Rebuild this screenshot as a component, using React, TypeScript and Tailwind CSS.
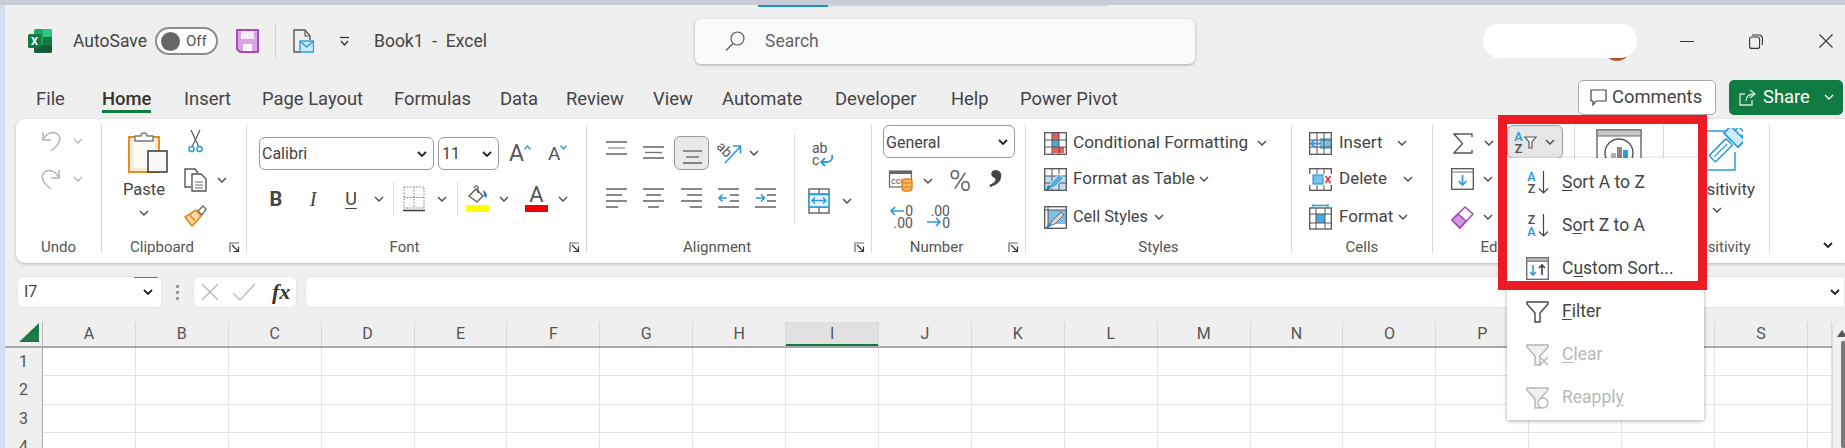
import React from 'react';

const columns = ['A', 'B', 'C', 'D', 'E', 'F', 'G', 'H', 'I', 'J', 'K', 'L', 'M', 'N', 'O', 'P', 'Q', 'R', 'S', ''];
const rows = ['1', '2', '3', '4'];

const tabs = [
    { label: 'File', cell: 'w-[66px]' },
    { label: 'Home', cell: 'w-[82px]' },
    { label: 'Insert', cell: 'w-[78px]' },
    { label: 'Page Layout', cell: 'w-[132px]' },
    { label: 'Formulas', cell: 'w-[106px]' },
    { label: 'Data', cell: 'w-[66px]' },
    { label: 'Review', cell: 'w-[87px]' },
    { label: 'View', cell: 'w-[69px]' },
    { label: 'Automate', cell: 'w-[113px]' },
    { label: 'Developer', cell: 'w-[116px]' },
    { label: 'Help', cell: 'w-[69px]' },
    { label: 'Power Pivot', cell: 'w-[110px]' },
];

const GRAY = '#5a5a5a';
const BLUE = '#2e9bdc';
const svgFont = 'Roboto, sans-serif';

function Chev({ className = '', dark = false }: { className?: string; dark?: boolean }) {
    return (
        <svg viewBox="0 0 10 6" className={`w-[10px] h-[6px] shrink-0 ${className}`}>
            <polyline points="1,1 5,5 9,1" fill="none" stroke={dark ? '#222' : '#4a4a4a'} strokeWidth={dark ? 1.8 : 1.4} />
        </svg>
    );
}

function ExcelLogo() {
    return (
        <svg viewBox="0 0 24 24" className="w-[24px] h-[24px] shrink-0 overflow-visible">
            <rect x="6" y="0" width="18" height="24" rx="2" fill="#21a366" />
            <path d="M15 0h7a2 2 0 0 1 2 2v6h-9z" fill="#33c481" />
            <rect x="15" y="8" width="9" height="8" fill="#107c41" />
            <path d="M6 16h18v6a2 2 0 0 1-2 2H8a2 2 0 0 1-2-2z" fill="#185c37" />
            <rect x="0" y="5" width="13" height="14" rx="1.5" fill="#107c41" />
            <text x="6.5" y="16" fontSize="11" fontWeight="700" textAnchor="middle" fill="#fff" fontFamily={svgFont}>X</text>
        </svg>
    );
}

function SaveIcon() {
    return (
        <svg viewBox="0 0 23 24" className="w-[23px] h-[24px] shrink-0">
            <path d="M1 1h21v22H4l-3-3z" fill="#d9a5e3" stroke="#ab47bf" strokeWidth="2" />
            <rect x="5" y="2" width="13" height="8" fill="#f6ecf8" />
            <rect x="7" y="15" width="9" height="7" fill="#fbf5fc" />
        </svg>
    );
}

function DocMail() {
    return (
        <svg viewBox="0 0 21 24" className="w-[21px] h-[24px] shrink-0">
            <path d="M9 23H1V1h11l5 6v4" fill="none" stroke={GRAY} strokeWidth="1.4" />
            <path d="M12 1v6h5" fill="none" stroke={GRAY} strokeWidth="1.2" />
            <rect x="7" y="12" width="13.5" height="11" fill="#cfe8f7" stroke={BLUE} strokeWidth="1.4" />
            <polyline points="7,12 13.7,18 20.5,12" fill="none" stroke={BLUE} strokeWidth="1.4" />
        </svg>
    );
}

function QuickMenu() {
    return (
        <svg viewBox="0 0 11 11" className="w-[11px] h-[11px] shrink-0">
            <line x1="1" y1="1.5" x2="10" y2="1.5" stroke="#333" strokeWidth="1.3" />
            <polyline points="2,5 5.5,9 9,5" fill="none" stroke="#333" strokeWidth="1.3" />
        </svg>
    );
}

function SearchIcon() {
    return (
        <svg viewBox="0 0 20 20" className="w-[20px] h-[20px] shrink-0">
            <circle cx="12.5" cy="7.5" r="6.5" fill="none" stroke="#555" strokeWidth="1.2" />
            <line x1="8" y1="12.5" x2="1" y2="19.5" stroke="#555" strokeWidth="1.3" />
        </svg>
    );
}

function Undo({ flip = false }: { flip?: boolean }) {
    return (
        <svg viewBox="0 0 20 22" className={`w-[20px] h-[22px] shrink-0 ${flip ? '-scale-x-100' : ''}`}>
            <path d="M2 2v8h8" fill="none" stroke="#b3b3b3" strokeWidth="1.4" />
            <path d="M2 10C6 2 14 0 18 6c3 5-3 11-8 15" fill="none" stroke="#b3b3b3" strokeWidth="1.4" />
        </svg>
    );
}

function PasteIcon() {
    return (
        <svg viewBox="0 0 40 41" className="w-[40px] h-[41px] shrink-0">
            <rect x="1" y="5" width="30" height="35" fill="#fdf4e6" stroke="#e98a1f" strokeWidth="2" />
            <rect x="4" y="8" width="24" height="29" fill="#fdfaf3" stroke="#f6d7ad" strokeWidth="1" />
            <path d="M7 9V4h6c0-4 6-4 6 0h6v5z" fill="#fff" stroke="#7a7a7a" strokeWidth="1.4" />
            <rect x="20" y="19" width="19" height="21" fill="#f8f8f8" stroke="#444" strokeWidth="1.6" />
        </svg>
    );
}

function Scissors() {
    return (
        <svg viewBox="0 0 15 23" className="w-[15px] h-[23px] shrink-0">
            <line x1="3" y1="0" x2="10.5" y2="16" stroke="#555" strokeWidth="1.2" />
            <line x1="12" y1="0" x2="4.5" y2="16" stroke="#555" strokeWidth="1.2" />
            <circle cx="3.5" cy="19" r="2.6" fill="#fff" stroke={BLUE} strokeWidth="1.5" />
            <circle cx="11.5" cy="19" r="2.6" fill="#fff" stroke={BLUE} strokeWidth="1.5" />
        </svg>
    );
}

function CopyIcon() {
    return (
        <svg viewBox="0 0 23 24" className="w-[23px] h-[24px] shrink-0">
            <path d="M7 19H1V1h10l3 4" fill="none" stroke="#555" strokeWidth="1.4" />
            <path d="M8 6h9l5 5v12H8z" fill="#fff" stroke="#555" strokeWidth="1.4" />
            <line x1="11" y1="14" x2="19" y2="14" stroke="#888" strokeWidth="1.2" />
            <line x1="11" y1="17" x2="19" y2="17" stroke="#888" strokeWidth="1.2" />
            <line x1="11" y1="20" x2="19" y2="20" stroke="#888" strokeWidth="1.2" />
        </svg>
    );
}

function PainterIcon() {
    return (
        <svg viewBox="0 0 23 22" className="w-[23px] h-[22px] shrink-0">
            <path d="M12 5l5 6-4 5-5 5-7-9 5-3z" fill="#fbd9ae" stroke="#e8861a" strokeWidth="1.6" />
            <line x1="6" y1="10" x2="11" y2="16" stroke="#e8861a" strokeWidth="1.4" />
            <path d="M14 6l5-5 3 3-4 6z" fill="#fff" stroke="#666" strokeWidth="1.3" />
        </svg>
    );
}

function Launcher({ className = '' }: { className?: string }) {
    return (
        <svg viewBox="0 0 11 11" className={`w-[11px] h-[11px] shrink-0 ${className}`}>
            <path d="M1 10V1h9" fill="none" stroke="#666" strokeWidth="1.2" />
            <path d="M3 3l6.5 6.5M9.5 4.5v5h-5" fill="none" stroke="#333" strokeWidth="1.2" />
        </svg>
    );
}

function FontStep({ up }: { up: boolean }) {
    return (
        <div className="flex items-start h-[24px] shrink-0">
            <span className={up ? 'text-[23px] leading-[24px] text-[#555]' : 'text-[19px] leading-[24px] text-[#555]'}>A</span>
            <svg viewBox="0 0 7 5" className="w-[7px] h-[5px] mt-[3px]">
                <polyline points={up ? '0.5,4.5 3.5,1 6.5,4.5' : '0.5,0.5 3.5,4 6.5,0.5'} fill="none" stroke={BLUE} strokeWidth="1.4" />
            </svg>
        </div>
    );
}

function BorderIcon() {
    return (
        <svg viewBox="0 0 22 26" className="w-[22px] h-[26px] shrink-0">
            <rect x="1" y="1" width="20" height="21" fill="none" stroke="#777" strokeWidth="1" strokeDasharray="1.5 1.5" />
            <line x1="11" y1="1" x2="11" y2="22" stroke="#777" strokeWidth="1" strokeDasharray="1.5 1.5" />
            <line x1="1" y1="11.5" x2="21" y2="11.5" stroke="#777" strokeWidth="1" strokeDasharray="1.5 1.5" />
            <line x1="0" y1="24.5" x2="22" y2="24.5" stroke="#444" strokeWidth="1.6" />
        </svg>
    );
}

function FillIcon() {
    return (
        <svg viewBox="0 0 23 27" className="w-[23px] h-[27px] shrink-0">
            <path d="M3 11l7-7 7 7-6 6z" fill="#fff" stroke="#555" strokeWidth="1.3" />
            <path d="M8 3c1-3 4-3 4 0v5" fill="none" stroke="#555" strokeWidth="1.2" />
            <path d="M17 5c2 1 4 3 4 7-1 1-3 0-3-2z" fill="#1f7fc9" />
            <rect x="0" y="20" width="23" height="7" fill="#ffff00" />
        </svg>
    );
}

function Lines({ kind }: { kind: string }) {
    const sets: Record<string, [number, number, number, string][]> = {
        top: [[0, 21, -1, '#555'], [2, 19, 5, '#999'], [0, 21, 11, '#555']],
        middle: [[0, 21, 4, '#555'], [2, 19, 9.5, '#777'], [0, 21, 15, '#555']],
        bottom: [[1, 20, 8, '#666'], [4, 17, 14, '#666'], [1, 20, 20, '#555']],
        left: [[0, 21, 1, '#555'], [0, 16, 7, '#555'], [0, 21, 13, '#555'], [0, 12, 19, '#555']],
        center: [[0, 21, 1, '#555'], [3, 18, 7, '#555'], [0, 21, 13, '#555'], [5, 16, 19, '#555']],
        right: [[0, 21, 1, '#555'], [6, 21, 7, '#555'], [0, 21, 13, '#555'], [9, 21, 19, '#555']],
    };
    return (
        <svg viewBox="0 0 20 20" className="w-[20px] h-[20px] shrink-0 overflow-visible">
            {sets[kind].map(([a, b, y, color]) => (
                <line key={y} x1={a} x2={b} y1={y} y2={y} stroke={color} strokeWidth="1.4" />
            ))}
        </svg>
    );
}

function Indent({ flip = false }: { flip?: boolean }) {
    return (
        <svg viewBox="0 0 21 20" className="w-[21px] h-[20px] shrink-0">
            <line x1="0" x2="21" y1="1" y2="1" stroke="#555" strokeWidth="1.4" />
            <line x1="12" x2="21" y1="7" y2="7" stroke="#555" strokeWidth="1.4" />
            <line x1="12" x2="21" y1="13" y2="13" stroke="#555" strokeWidth="1.4" />
            <line x1="0" x2="21" y1="19" y2="19" stroke="#555" strokeWidth="1.4" />
            {flip ? (
                <path d="M1 10h8M6 6.5l3.5 3.5L6 13.5" fill="none" stroke={BLUE} strokeWidth="1.6" />
            ) : (
                <path d="M9 10H1M4.5 6.5L1 10l3.5 3.5" fill="none" stroke={BLUE} strokeWidth="1.6" />
            )}
        </svg>
    );
}

function OrientIcon() {
    return (
        <svg viewBox="0 0 24 26" className="w-[24px] h-[26px] shrink-0 overflow-visible">
            <text x="7" y="14" fontSize="14" textAnchor="middle" fill="#555" fontFamily={svgFont} transform="rotate(45 7 10)">ab</text>
            <path d="M8 23L23 7M16 6h7.5v7.5" fill="none" stroke={BLUE} strokeWidth="1.6" />
        </svg>
    );
}

function WrapIcon() {
    return (
        <svg viewBox="0 0 21 26" className="w-[21px] h-[26px] shrink-0 overflow-visible">
            <text x="0" y="10" fontSize="14" fill="#555" fontFamily={svgFont}>ab</text>
            <text x="0" y="22" fontSize="14" fill="#555" fontFamily={svgFont}>c</text>
            <path d="M20 12c1 4-1 7-5 7H9M13 15l-4 4 4 4" fill="none" stroke={BLUE} strokeWidth="1.8" />
        </svg>
    );
}

function MergeIcon() {
    return (
        <svg viewBox="0 0 22 26" className="w-[22px] h-[26px] shrink-0">
            <rect x="1" y="1" width="20" height="24" fill="#fff" stroke="#555" strokeWidth="1.3" />
            <line x1="1" y1="6" x2="21" y2="6" stroke="#555" strokeWidth="1.2" />
            <line x1="1" y1="19" x2="21" y2="19" stroke="#555" strokeWidth="1.2" />
            <line x1="11" y1="1" x2="11" y2="6" stroke="#555" strokeWidth="1.2" />
            <line x1="11" y1="19" x2="11" y2="25" stroke="#555" strokeWidth="1.2" />
            <rect x="1" y="6.5" width="20" height="12.5" fill="#e3f2fc" stroke={BLUE} strokeWidth="1.5" />
            <path d="M4 12.5h14M7 9.5l-3 3 3 3M15 9.5l3 3-3 3" fill="none" stroke={BLUE} strokeWidth="1.4" />
        </svg>
    );
}

function AccountingIcon() {
    return (
        <svg viewBox="0 0 24 22" className="w-[24px] h-[22px] shrink-0 overflow-visible">
            <rect x="0.5" y="1" width="22" height="16" fill="#fff" stroke="#666" strokeWidth="1.2" />
            <rect x="0.5" y="1" width="22" height="3" fill="#666" />
            <text x="2" y="14" fontSize="9" fill="#555" fontFamily={svgFont}>ccc</text>
            <rect x="13" y="9" width="10" height="12" rx="3" fill="#f6b26b" stroke="#e8861a" strokeWidth="1.4" />
            <line x1="13" y1="13" x2="23" y2="13" stroke="#e8861a" strokeWidth="1.2" />
            <line x1="13" y1="17" x2="23" y2="17" stroke="#e8861a" strokeWidth="1.2" />
        </svg>
    );
}

function DecimalIcon({ more = false }: { more?: boolean }) {
    return (
        <svg viewBox="0 0 23 24" className="w-[23px] h-[24px] shrink-0 overflow-visible">
            <text x="23" y="11" fontSize="14" textAnchor="end" fill="#555" fontFamily={svgFont}>{more ? '.00' : '0'}</text>
            <text x="23" y="23" fontSize="14" textAnchor="end" fill="#555" fontFamily={svgFont}>{more ? '0' : '.00'}</text>
            {more ? (
                <path d="M0 17h13M9 13l4 4-4 4" fill="none" stroke={BLUE} strokeWidth="1.7" />
            ) : (
                <path d="M14 6H1M5 2L1 6l4 4" fill="none" stroke={BLUE} strokeWidth="1.7" />
            )}
        </svg>
    );
}

function GridBase({ children }: { children?: React.ReactNode }) {
    return (
        <svg viewBox="0 0 23 23" className="w-[23px] h-[23px] shrink-0">
            {children}
        </svg>
    );
}

function GridLines() {
    return (
        <>
            <rect x="0.7" y="0.7" width="21.6" height="21.6" fill="none" stroke="#555" strokeWidth="1.3" />
            <line x1="8" y1="1" x2="8" y2="22" stroke="#555" strokeWidth="1" />
            <line x1="15" y1="1" x2="15" y2="22" stroke="#555" strokeWidth="1" />
            <line x1="1" y1="8" x2="22" y2="8" stroke="#555" strokeWidth="1" />
            <line x1="1" y1="15" x2="22" y2="15" stroke="#555" strokeWidth="1" />
        </>
    );
}

function CondFormatIcon() {
    return (
        <GridBase>
            <rect x="8" y="1" width="7" height="7" fill="#f05a5a" />
            <rect x="8" y="8" width="7" height="7" fill="#4ea8e0" />
            <rect x="8" y="15" width="12" height="6" fill="#f05a5a" />
            <GridLines />
        </GridBase>
    );
}

function TableStyleIcon() {
    return (
        <GridBase>
            <rect x="1" y="8" width="21" height="14" fill="#bfe0f5" />
            <GridLines />
            <path d="M4 21l3-6 8-9 5 4-9 9z" fill="#5cace0" stroke="#fff" strokeWidth="0.8" />
            <path d="M1 22c3 1 6-1 6-4l-3-1c-1 2-1 3-3 5z" fill="#2e85c4" />
        </GridBase>
    );
}

function CellStyleIcon() {
    return (
        <GridBase>
            <rect x="4" y="4" width="18" height="14" fill="#7fc0ea" />
            <rect x="0.7" y="0.7" width="21.6" height="21.6" fill="none" stroke="#555" strokeWidth="1.3" />
            <line x1="1" y1="4" x2="22" y2="4" stroke="#555" strokeWidth="1" />
            <line x1="4" y1="1" x2="4" y2="22" stroke="#555" strokeWidth="1" />
            <path d="M5 20l3-5 9-9 3 3-9 9z" fill="#cfd3d6" stroke="#555" strokeWidth="0.8" />
            <path d="M1 22c3 1 6-1 6-4l-2-1c-1 2-2 3-4 5z" fill="#2e85c4" />
        </GridBase>
    );
}

function InsertCellsIcon() {
    return (
        <GridBase>
            <rect x="11" y="6" width="11" height="11" fill="#7fc0ea" />
            <GridLines />
            <path d="M12 11.5H2M6 7.5l-4 4 4 4" fill="none" stroke={BLUE} strokeWidth="1.8" />
        </GridBase>
    );
}

function DeleteCellsIcon() {
    return (
        <GridBase>
            <rect x="0.7" y="0.7" width="21.6" height="21.6" fill="none" stroke="#555" strokeWidth="1.3" />
            <line x1="8" y1="1" x2="8" y2="6" stroke="#555" strokeWidth="1" />
            <line x1="15" y1="1" x2="15" y2="6" stroke="#555" strokeWidth="1" />
            <line x1="8" y1="17" x2="8" y2="22" stroke="#555" strokeWidth="1" />
            <line x1="15" y1="17" x2="15" y2="22" stroke="#555" strokeWidth="1" />
            <rect x="0" y="6" width="23" height="11" fill="#fff" />
            <rect x="4" y="7" width="10" height="9" fill="#7fc0ea" stroke={BLUE} strokeWidth="1.2" />
            <path d="M16.5 8l5 7M21.5 8l-5 7" stroke="#e03a3a" strokeWidth="1.6" />
        </GridBase>
    );
}

function FormatCellsIcon() {
    return (
        <svg viewBox="0 0 23 26" className="w-[23px] h-[26px] shrink-0">
            <path d="M4 1.5h15M4 0v3M19 0v3" stroke={BLUE} strokeWidth="1.3" />
            <rect x="0.7" y="4" width="21.6" height="21" fill="none" stroke="#555" strokeWidth="1.3" />
            <rect x="7" y="10" width="9" height="9" fill="#4ea8e0" />
            <line x1="7" y1="4" x2="7" y2="25" stroke="#555" strokeWidth="1" />
            <line x1="16" y1="4" x2="16" y2="25" stroke="#555" strokeWidth="1" />
            <line x1="1" y1="10" x2="22" y2="10" stroke="#555" strokeWidth="1" />
            <line x1="1" y1="19" x2="22" y2="19" stroke="#555" strokeWidth="1" />
        </svg>
    );
}

function SumIcon() {
    return (
        <svg viewBox="0 0 20 21" className="w-[20px] h-[21px] shrink-0 ml-[2px]">
            <path d="M19 4V1H1l8.5 9.5L1 20h18v-3" fill="none" stroke="#555" strokeWidth="1.4" />
        </svg>
    );
}

function FillDownIcon() {
    return (
        <svg viewBox="0 0 23 22" className="w-[23px] h-[22px] shrink-0">
            <rect x="0.7" y="0.7" width="21.6" height="20.6" fill="#fff" stroke="#555" strokeWidth="1.3" />
            <line x1="1" y1="4" x2="22" y2="4" stroke="#888" strokeWidth="1.2" />
            <path d="M11.5 7v10M7.5 13l4 4 4-4" fill="none" stroke={BLUE} strokeWidth="1.7" />
        </svg>
    );
}

function EraserIcon() {
    return (
        <svg viewBox="0 0 23 23" className="w-[23px] h-[23px] shrink-0">
            <path d="M1 14L14 1l8 7L9 22z" fill="#fff" stroke="#a744bd" strokeWidth="1.5" />
            <path d="M1 14l6-6 8 7-6 7z" fill="#cf9adb" stroke="#a744bd" strokeWidth="1.5" />
        </svg>
    );
}

function SortLetters({ first, second }: { first: string; second: string }) {
    return (
        <>
            <text x="5.5" y="10" fontSize="12.5" fontWeight="600" textAnchor="middle" fill={first === 'A' ? BLUE : '#555'} fontFamily={svgFont}>{first}</text>
            <text x="5.5" y="22" fontSize="12.5" fontWeight="600" textAnchor="middle" fill={second === 'A' ? BLUE : '#555'} fontFamily={svgFont}>{second}</text>
        </>
    );
}

function SortIcon({ first, second }: { first: string; second: string }) {
    return (
        <svg viewBox="0 0 23 23" className="w-[23px] h-[23px] shrink-0 overflow-visible">
            <SortLetters first={first} second={second} />
            <path d="M17.5 0v22M13 17.5l4.5 4.5 4.5-4.5" fill="none" stroke="#444" strokeWidth="1.2" />
        </svg>
    );
}

function SortFilterIcon() {
    return (
        <svg viewBox="0 0 24 23" className="w-[24px] h-[23px] shrink-0 overflow-visible">
            <SortLetters first="A" second="Z" />
            <path d="M12 6h11l-4 5v6h-3v-6z" fill="#fff" stroke="#555" strokeWidth="1.2" />
        </svg>
    );
}

function CustomSortIcon() {
    return (
        <svg viewBox="0 0 23 23" className="w-[23px] h-[23px] shrink-0">
            <rect x="0.7" y="0.7" width="21.6" height="21.6" fill="#fff" stroke="#666" strokeWidth="1.3" />
            <rect x="0.7" y="0.7" width="21.6" height="3.5" fill="#bdbdbd" stroke="#666" strokeWidth="1" />
            <path d="M7 8v10M4 15l3 3 3-3" fill="none" stroke={BLUE} strokeWidth="1.6" />
            <path d="M16 18V8M13 11l3-3 3 3" fill="none" stroke="#444" strokeWidth="1.6" />
        </svg>
    );
}

function FunnelIcon({ color = '#444', light = false }: { color?: string; light?: boolean }) {
    return <path d="M1 2h21v2l-8 9v9H9v-9L1 4z" fill={light ? '#f1f1f1' : '#fff'} stroke={color} strokeWidth="1.4" />;
}

function AnalyzeIcon() {
    return (
        <svg viewBox="0 0 46 42" className="w-[46px] h-[42px] shrink-0">
            <rect x="1" y="1" width="44" height="40" fill="#fff" stroke="#666" strokeWidth="1.4" />
            <rect x="1" y="1" width="44" height="6" fill="#c8c8c8" stroke="#666" strokeWidth="1" />
            <circle cx="23" cy="24" r="14" fill="#fff" stroke="#555" strokeWidth="1.4" />
            <rect x="15" y="24" width="5" height="8" fill="#b5b5b5" />
            <rect x="21" y="18" width="5" height="14" fill="#8a8a8a" />
            <rect x="27" y="21" width="5" height="11" fill={BLUE} />
        </svg>
    );
}

function SensitivityIcon() {
    return (
        <svg viewBox="0 0 46 44" className="w-[46px] h-[44px] shrink-0">
            <path d="M28 3H4v39h34V24" fill="#fff" stroke={BLUE} strokeWidth="1.5" />
            <g transform="rotate(-45 23 23)">
                <rect x="12" y="18.5" width="24" height="9" rx="1" fill="#fff" stroke={BLUE} strokeWidth="1.6" />
                <line x1="15" y1="23" x2="33" y2="23" stroke={BLUE} strokeWidth="1.3" />
            </g>
            <g transform="rotate(45 36 10)">
                <rect x="26" y="3" width="20" height="10" fill="#cfe8f7" stroke={BLUE} strokeWidth="1.8" />
                <rect x="32" y="-2" width="9" height="5" fill="#fff" stroke={BLUE} strokeWidth="1.6" />
            </g>
        </svg>
    );
}

function Group({ width, label, launcher = false, children }: { width: string; label?: string; launcher?: boolean; children?: React.ReactNode }) {
    return (
        <div className={`${width} h-[128px] shrink-0 border-r border-[#d9d9d9] flex flex-col`}>
            <div className="h-[116px]">{children}</div>
            <div className="h-[12px] flex items-center text-[15px] text-[#555]">
                <span className="flex-1 text-center leading-[12px]">{label}</span>
                {launcher && <div className="w-[24px] flex justify-center"><Launcher /></div>}
            </div>
        </div>
    );
}

function StyleRow({ icon, label, cell, className = '' }: { icon: React.ReactNode; label: string; cell: string; className?: string }) {
    return (
        <div className={`flex items-center h-[22px] ${className}`}>
            {icon}
            <span className={`ml-[6px] whitespace-nowrap ${cell}`}>{label}</span>
            <Chev className="w-[8px]" />
        </div>
    );
}

function MenuItem({ icon, disabled = false, children }: { icon: React.ReactNode; disabled?: boolean; children: React.ReactNode }) {
    return (
        <div className={`flex items-center h-[43px] pl-[19px] text-[17.5px] ${disabled ? 'text-[#b8b8b8]' : 'text-[#444]'}`}>
            <div className="w-[36px] shrink-0">{icon}</div>
            <span className="whitespace-nowrap">{children}</span>
        </div>
    );
}

function Sheet() {
    return (
        <div className="flex flex-1 min-h-0 mt-[14px]">
            <div className="w-[1827px] shrink-0">
                <div className="flex h-[24px] border-b-2 border-[#a9a9a9] box-content">
                    <div className="w-[38px] shrink-0 border-r border-[#bdbdbd] flex justify-end items-start pr-[3px] pt-[1px]">
                        <svg viewBox="0 0 20 19" className="w-[20px] h-[19px]">
                            <path d="M20 0v19H0z" fill="#1b7a46" />
                        </svg>
                    </div>
                    {columns.map((c) => (
                        <div
                            key={c || 'last'}
                            className={`${c ? 'w-[92.9px] shrink-0' : 'flex-1'} text-center text-[16px] leading-[24px] border-r border-[#d8d8d8] text-[#555] ${c === 'I' ? 'bg-[#e1e1e1] shadow-[inset_0_-2px_0_#107c41]' : ''}`}
                        >
                            {c}
                        </div>
                    ))}
                </div>
                {rows.map((r) => (
                    <div key={r} className="flex h-[28.3px]">
                        <div className="w-[38px] shrink-0 text-center text-[16px] leading-[28px] text-[#555] border-r border-[#a9a9a9]">{r}</div>
                        {columns.map((c) => (
                            <div key={c || 'last'} className={`${c ? 'w-[92.9px] shrink-0' : 'flex-1'} bg-white border-r border-b border-[#e4e4e4]`} />
                        ))}
                    </div>
                ))}
            </div>
            <div className="flex-1 bg-[#f1f1f1] rounded-tl-[6px] border-l border-[#dcdcdc] flex flex-col items-end pt-[8px]">
                <div className="w-0 h-0 border-x-[5px] border-x-transparent border-b-[7px] border-b-[#555] -mr-[2px]" />
                <div className="w-[4px] flex-1 mt-[4px] bg-[#7a7a7a] rounded-l-[2px]" />
            </div>
        </div>
    );
}

export default function App() {
    return (
        <div className="relative w-[1845px] h-[448px] overflow-hidden bg-[#d3deee] font-['Roboto',sans-serif] text-[17.5px] text-[#444]">
            <div className="h-[5px] bg-[#c8ccd6]" />
            <div className="flex h-[443px]">
                <div className="w-[5px] shrink-0" />
                <div className="flex-1 min-w-0 flex flex-col bg-[#efefef]">
                    {/* progress strip under the frame */}
                    <div className="flex h-[2px] shrink-0 pl-[753px]">
                        <div className="w-[70px] bg-[#1f8ce0]" />
                        <div className="w-[280px] bg-[#d9dde6]" />
                    </div>

                    {/* title bar */}
                    <div className="flex items-center h-[68px] shrink-0 pl-[23px]">
                        <ExcelLogo />
                        <span className="ml-[21px] w-[82px] shrink-0">AutoSave</span>
                        <div className="w-[63px] h-[28px] shrink-0 rounded-full border-2 border-[#8c8c8c] bg-white flex items-center pl-[4px]">
                            <div className="w-[19px] h-[19px] rounded-full bg-[#666]" />
                            <span className="ml-[6px] text-[15px] text-[#555]">Off</span>
                        </div>
                        <div className="ml-[18px]"><SaveIcon /></div>
                        <div className="ml-[16px] w-px h-[34px] bg-[#d4d4d4]" />
                        <div className="ml-[17px]"><DocMail /></div>
                        <div className="ml-[25px]"><QuickMenu /></div>
                        <span className="ml-[24px] w-[321px] shrink-0 whitespace-pre">Book1  -  Excel</span>
                        <div className="w-[500px] h-[45px] shrink-0 rounded-[6px] bg-[#fafafa] shadow-[0_1px_3px_rgba(0,0,0,0.3)] flex items-center pl-[30px]">
                            <SearchIcon />
                            <span className="ml-[20px] text-[#666]">Search</span>
                        </div>
                        <div className="relative ml-[288px] w-[154px] h-[34px] shrink-0">
                            <div className="absolute left-[121px] top-[20px] w-[26px] h-[17px] rounded-b-full bg-[#b5562a]" />
                            <div className="absolute inset-0 rounded-[17px] bg-white" />
                        </div>
                        <div className="ml-[43px] w-[14px] h-px bg-[#333]" />
                        <svg viewBox="0 0 14 15" className="ml-[55px] w-[14px] h-[15px] shrink-0">
                            <rect x="0.6" y="3" width="10" height="11.4" rx="2" fill="none" stroke="#333" strokeWidth="1.1" />
                            <path d="M3 1h7a3.4 3.4 0 0 1 3.4 3.4V11" fill="none" stroke="#333" strokeWidth="1.1" />
                        </svg>
                        <svg viewBox="0 0 14 14" className="ml-[56px] w-[14px] h-[14px] shrink-0">
                            <path d="M0.5 0.5l13 13M13.5 0.5l-13 13" stroke="#333" strokeWidth="1.1" />
                        </svg>
                    </div>

                    {/* tabs */}
                    <div className="flex items-center justify-between h-[44px] shrink-0 pl-[31px] pr-[2px]">
                        <div className="flex pt-[4px] text-[18.4px]">
                            {tabs.map((tab) => (
                                <div key={tab.label} className={`${tab.cell} shrink-0`}>
                                    <span className={`inline-block whitespace-nowrap leading-[22px] border-b-[3px] ${tab.label === 'Home' ? 'border-[#107c41] font-medium text-[#333]' : 'border-transparent'}`}>
                                        {tab.label}
                                    </span>
                                </div>
                            ))}
                        </div>
                        <div className="flex gap-[13px] text-[18.4px]">
                            <div className="w-[138px] h-[35px] rounded-[5px] border border-[#a8a8a8] bg-white flex items-center pl-[11px]">
                                <svg viewBox="0 0 17 17" className="w-[17px] h-[17px]">
                                    <path d="M1 1h15v11H6l-3 4v-4H1z" fill="none" stroke="#444" strokeWidth="1.2" />
                                </svg>
                                <span className="ml-[5px]">Comments</span>
                            </div>
                            <div className="w-[114px] h-[35px] rounded-[5px] bg-[#107c41] flex items-center pl-[10px] text-white">
                                <svg viewBox="0 0 17 17" className="w-[17px] h-[17px]">
                                    <path d="M6 5H1v11h12v-5M7 12c0-5 3-7 9-7M11 1l5 4-5 4" fill="none" stroke="#cfe5d9" strokeWidth="1.3" />
                                </svg>
                                <span className="ml-[7px]">Share</span>
                                <Chev className="ml-[14px] brightness-0 invert" />
                            </div>
                        </div>
                    </div>

                    {/* ribbon */}
                    <div className="flex ml-[11px] h-[144px] shrink-0 pt-[6px] bg-white rounded-l-[9px] shadow-[0_1px_3px_rgba(0,0,0,0.25)]">
                        <Group width="w-[86px]" label="Undo">
                            <div className="flex items-center h-[22px] mt-[5px] pl-[25px]">
                                <Undo />
                                <Chev className="ml-[12px] opacity-40" />
                            </div>
                            <div className="flex items-center h-[22px] mt-[16px] pl-[25px]">
                                <Undo flip />
                                <Chev className="ml-[12px] opacity-40" />
                            </div>
                        </Group>

                        <Group width="w-[145px]" label="Clipboard" launcher>
                            <div className="flex">
                                <div className="ml-[14px] w-[56px] flex flex-col items-center">
                                    <div className="mt-[7px] ml-[8px]"><PasteIcon /></div>
                                    <span className="mt-[6px] leading-[22px] text-[16.5px]">Paste</span>
                                    <Chev className="mt-[9px]" />
                                </div>
                                <div className="ml-[12px] flex flex-col">
                                    <div className="flex h-[23px] mt-[5px] pl-[4px]"><Scissors /></div>
                                    <div className="flex items-center h-[23px] mt-[15px]">
                                        <CopyIcon />
                                        <Chev className="ml-[10px]" />
                                    </div>
                                    <div className="mt-[14px]"><PainterIcon /></div>
                                </div>
                            </div>
                        </Group>

                        <Group width="w-[340px]" label="Font" launcher>
                            <div className="flex items-center mt-[12px] pl-[12px]">
                                <div className="w-[175px] h-[33px] rounded-[6px] border border-[#9a9a9a] flex items-center justify-between pl-[2px] pr-[6px] text-[16px]">
                                    <span>Calibri</span>
                                    <Chev dark />
                                </div>
                                <div className="ml-[4px] w-[61px] h-[33px] rounded-[6px] border border-[#9a9a9a] flex items-center justify-between pl-[3px] pr-[6px] text-[16px]">
                                    <span>11</span>
                                    <Chev dark />
                                </div>
                                <div className="ml-[10px]"><FontStep up /></div>
                                <div className="ml-[17px]"><FontStep up={false} /></div>
                            </div>
                            <div className="flex items-center h-[27px] mt-[15px]">
                                <span className="ml-[18px] w-[22px] text-center text-[20px] font-bold text-[#444]">B</span>
                                <span className="ml-[15px] w-[22px] text-center text-[20px] italic font-['Liberation_Serif',serif] text-[#444]">I</span>
                                <span className="ml-[16px] w-[22px] text-center text-[18px] underline underline-offset-[3px] text-[#444]">U</span>
                                <Chev className="ml-[12px]" />
                                <div className="ml-[9px] w-px h-[34px] bg-[#dcdcdc]" />
                                <div className="ml-[9px]"><BorderIcon /></div>
                                <Chev className="ml-[12px]" />
                                <div className="ml-[10px] w-px h-[34px] bg-[#dcdcdc]" />
                                <div className="ml-[8px]"><FillIcon /></div>
                                <Chev className="ml-[10px]" />
                                <div className="ml-[16px] flex flex-col items-center w-[23px]">
                                    <span className="text-[22px] leading-[20px] text-[#555]">A</span>
                                    <div className="w-[23px] h-[7px] bg-[#f00000]" />
                                </div>
                                <Chev className="ml-[10px]" />
                            </div>
                        </Group>

                        <Group width="w-[285px]" label="Alignment" launcher>
                            <div className="flex">
                                <div className="w-[207px] shrink-0">
                                    <div className="flex items-center h-[34px] mt-[11px]">
                                        <div className="ml-[19px]"><Lines kind="top" /></div>
                                        <div className="ml-[17px]"><Lines kind="middle" /></div>
                                        <div className="ml-[11px] w-[35px] h-[34px] rounded-[6px] bg-[#e9e9e9] border border-[#9b9b9b] flex items-center justify-center">
                                            <Lines kind="bottom" />
                                        </div>
                                        <div className="ml-[8px]"><OrientIcon /></div>
                                        <Chev className="ml-[8px]" />
                                    </div>
                                    <div className="flex items-center h-[26px] mt-[15px]">
                                        <div className="ml-[19px]"><Lines kind="left" /></div>
                                        <div className="ml-[17px]"><Lines kind="center" /></div>
                                        <div className="ml-[18px]"><Lines kind="right" /></div>
                                        <div className="ml-[17px]"><Indent /></div>
                                        <div className="ml-[16px]"><Indent flip /></div>
                                    </div>
                                </div>
                                <div className="w-px h-[90px] mt-[9px] bg-[#dcdcdc]" />
                                <div className="ml-[13px] flex flex-col">
                                    <div className="mt-[18px] ml-[4px]"><WrapIcon /></div>
                                    <div className="flex items-center mt-[19px]">
                                        <MergeIcon />
                                        <Chev className="ml-[12px]" />
                                    </div>
                                </div>
                            </div>
                        </Group>

                        <Group width="w-[154px]" label="Number" launcher>
                            <div className="ml-[11px] w-[132px] h-[33px] rounded-[6px] border border-[#9a9a9a] flex items-center justify-between pl-[2px] pr-[6px] text-[16px]">
                                <span className="translate-y-px">General</span>
                                <Chev dark />
                            </div>
                            <div className="flex items-center h-[24px] mt-[11px] pl-[17px]">
                                <AccountingIcon />
                                <Chev className="ml-[10px]" />
                                <span className="ml-[15px] w-[24px] text-center text-[30px] leading-[24px] font-light text-[#555]">%</span>
                                <span className="ml-[17px] text-[58px] leading-[24px] font-bold font-['Liberation_Serif',serif] -translate-y-[22px] text-[#444]">,</span>
                            </div>
                            <div className="flex items-center h-[24px] mt-[12px] pl-[18px]">
                                <DecimalIcon />
                                <div className="ml-[14px]"><DecimalIcon more /></div>
                            </div>
                        </Group>

                        <Group width="w-[266px]" label="Styles">
                            <div className="pl-[18px] text-[#444]">
                                <StyleRow className="mt-[7px]" cell="w-[184px] text-[17.2px]" icon={<CondFormatIcon />} label="Conditional Formatting" />
                                <StyleRow className="mt-[14px]" cell="w-[126px] text-[17px]" icon={<TableStyleIcon />} label="Format as Table" />
                                <StyleRow className="mt-[16px]" cell="w-[81px] text-[16.3px]" icon={<CellStyleIcon />} label="Cell Styles" />
                            </div>
                        </Group>

                        <Group width="w-[141px]" label="Cells">
                            <div className="pl-[17px] text-[17px]">
                                <div className="flex items-center h-[22px] mt-[7px]">
                                    <InsertCellsIcon />
                                    <span className="ml-[7px] w-[58px]">Insert</span>
                                    <Chev />
                                </div>
                                <div className="flex items-center h-[22px] mt-[14px]">
                                    <DeleteCellsIcon />
                                    <span className="ml-[7px] w-[64px]">Delete</span>
                                    <Chev />
                                </div>
                                <div className="flex items-center h-[22px] mt-[16px]">
                                    <FormatCellsIcon />
                                    <span className="ml-[7px] w-[59px]">Format</span>
                                    <Chev />
                                </div>
                            </div>
                        </Group>

                        <Group width="w-[142px]" label="Editing">
                            <div className="flex">
                                <div className="w-[74px] shrink-0 pl-[18px]">
                                    <div className="flex items-center h-[22px] mt-[7px]">
                                        <SumIcon />
                                        <Chev className="ml-[11px]" />
                                    </div>
                                    <div className="flex items-center h-[22px] mt-[14px]">
                                        <FillDownIcon />
                                        <Chev className="ml-[9px]" />
                                    </div>
                                    <div className="flex items-center h-[22px] mt-[16px]">
                                        <EraserIcon />
                                        <Chev className="ml-[9px]" />
                                    </div>
                                </div>
                                <div className="w-[56px] h-[34px] rounded-[6px] border border-[#a0a0a0] bg-[#e6e6e6] flex items-center pl-[5px]">
                                    <SortFilterIcon />
                                    <Chev className="ml-[8px]" />
                                </div>
                            </div>
                        </Group>

                        <Group width="w-[89px]">
                            <div className="flex justify-center mt-[4px]"><AnalyzeIcon /></div>
                        </Group>

                        <Group width="w-[106px]" label="Sensitivity">
                            <div className="flex flex-col items-center">
                                <div className="mt-[3px] ml-[7px]"><SensitivityIcon /></div>
                                <span className="mt-[6px] leading-[22px] text-[17px]">Sensitivity</span>
                                <Chev className="mt-[7px]" />
                            </div>
                        </Group>

                        <div className="flex-1 flex justify-end items-end pr-[11px] pb-[15px]">
                            <Chev dark className="w-[12px]" />
                        </div>
                    </div>

                    {/* formula bar */}
                    <div className="flex h-[32px] mt-[13px] shrink-0 pl-[12px]">
                        <div className="relative w-[145px] shrink-0 rounded-[6px] bg-white border border-[#e6e6e6] flex items-center justify-between pl-[6px] pr-[8px]">
                            <span className="text-[16px]">I7</span>
                            <Chev dark />
                            <div className="absolute right-[3px] top-0 w-[24px] h-px bg-[#777]" />
                        </div>
                        <div className="ml-[14px] w-[4px] flex flex-col justify-center gap-[3px]">
                            <div className="w-[3px] h-[3px] bg-[#999]" />
                            <div className="w-[3px] h-[3px] bg-[#999]" />
                            <div className="w-[3px] h-[3px] bg-[#999]" />
                        </div>
                        <div className="ml-[13px] w-[104px] shrink-0 rounded-[6px] bg-white border border-[#e6e6e6] flex items-center pl-[7px]">
                            <svg viewBox="0 0 18 18" className="w-[18px] h-[18px]">
                                <path d="M1 1l16 16M17 1L1 17" stroke="#b5b5b5" strokeWidth="1.2" />
                            </svg>
                            <svg viewBox="0 0 24 18" className="ml-[13px] w-[24px] h-[18px]">
                                <path d="M1 10l7 7L23 1" fill="none" stroke="#b5b5b5" strokeWidth="1.2" />
                            </svg>
                            <span className="ml-[16px] font-['Liberation_Serif',serif] italic font-bold text-[22px] leading-none text-[#333]">fx</span>
                        </div>
                        <div className="ml-[8px] flex-1 rounded-l-[6px] bg-white border border-[#e6e6e6] flex items-center justify-end pr-[4px]">
                            <Chev dark />
                        </div>
                    </div>

                    <Sheet />
                </div>
            </div>

            {/* sort & filter dropdown */}
            <div className="absolute left-[1507px] top-[158px] w-[197px] h-[262px] bg-white shadow-[0_1px_4px_rgba(0,0,0,0.35)] pt-[3px]">
                <MenuItem icon={<SortIcon first="A" second="Z" />}><u className="underline-offset-2">S</u>ort A to Z</MenuItem>
                <MenuItem icon={<SortIcon first="Z" second="A" />}>S<u className="underline-offset-2">o</u>rt Z to A</MenuItem>
                <MenuItem icon={<CustomSortIcon />}>C<u className="underline-offset-2">u</u>stom Sort...</MenuItem>
                <MenuItem icon={<svg viewBox="0 0 23 23" className="w-[23px] h-[23px]"><FunnelIcon /></svg>}><u className="underline-offset-2">F</u>ilter</MenuItem>
                <MenuItem disabled icon={
                    <svg viewBox="0 0 23 23" className="w-[23px] h-[23px]">
                        <FunnelIcon color="#b5b5b5" light />
                        <path d="M14 14l8 8M22 14l-8 8" stroke="#b5b5b5" strokeWidth="1.3" />
                    </svg>
                }><u className="underline-offset-2">C</u>lear</MenuItem>
                <MenuItem disabled icon={
                    <svg viewBox="0 0 23 23" className="w-[23px] h-[23px]">
                        <FunnelIcon color="#b5b5b5" light />
                        <circle cx="17" cy="17" r="5" fill="#fff" stroke="#b5b5b5" strokeWidth="1.3" />
                    </svg>
                }>Reappl<u className="underline-offset-2">y</u></MenuItem>
            </div>

            {/* red annotation frame */}
            <div className="absolute left-[1498px] top-[115px] w-[209px] h-[175px] border-[9px] border-[#ed1c24]" />
        </div>
    );
}
